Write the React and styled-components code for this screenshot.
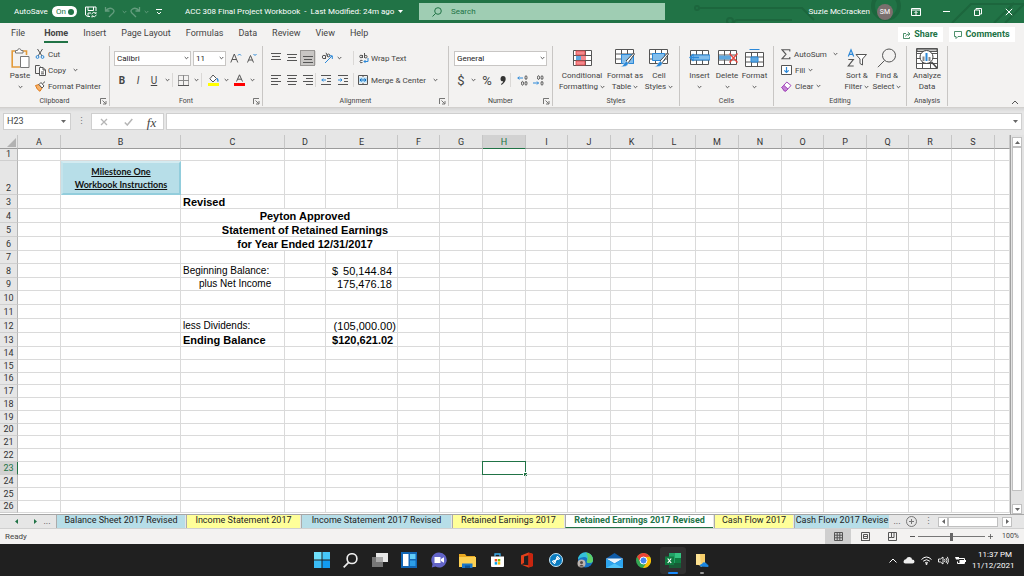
import React from 'react';
import styled, { createGlobalStyle } from 'styled-components';

const GlobalStyle = createGlobalStyle`
  * { box-sizing: border-box; }
  body {
    margin: 0;
    font-family: Roboto, 'Open Sans', sans-serif;
    font-size: 8px;
    line-height: 11px;
    color: #444;
    overflow: hidden;
  }
  button, input, select {
    font: inherit;
    color: inherit;
    border: 0;
    margin: 0;
    padding: 0;
    background: none;
    outline: none;
  }
  svg { display: block; flex: none; }
`;

const Page = styled.div`
  display: flex;
  flex-direction: column;
  height: 100vh;
  background: #e6e6e6;
`;

/* ---------- title bar ---------- */
const TitleBar = styled.header`
  display: flex;
  align-items: center;
  height: 23px;
  flex: none;
  background: #217346;
  color: #fff;
  position: relative;
`;
const Circuit = styled.svg`
  position: absolute;
  right: 0;
  top: 0;
`;
const AutoSave = styled.label`
  display: flex;
  align-items: center;
  justify-content: space-between;
  width: 85px;
  flex: none;
  padding: 0 8px 0 14px;
`;
const Toggle = styled.button`
  display: flex;
  align-items: center;
  justify-content: space-between;
  width: 25px;
  height: 11px;
  padding: 0 3px 0 4px;
  border-radius: 6px;
  background: #fff;
  color: #217346;
  line-height: 11px;
  &::after {
    content: '';
    width: 6px;
    height: 6px;
    border-radius: 3px;
    background: #217346;
  }
`;
const Quick = styled.button`
  display: flex;
  align-items: center;
  justify-content: center;
  width: ${p => p.w}px;
  height: 20px;
  flex: none;
  opacity: ${p => (p.disabled ? 0.3 : 1)};
`;
const DocTitle = styled.div`
  display: flex;
  align-items: center;
  gap: 4px;
  width: 251px;
  flex: none;
  padding-left: 17px;
  white-space: nowrap;
`;
const SearchBox = styled.label`
  display: flex;
  align-items: center;
  gap: 9px;
  width: 246px;
  height: 17px;
  padding-left: 13px;
  background: #9fcdb3;
  color: #217346;
  input { width: 180px; }
  input::placeholder { color: #217346; opacity: 1; }
`;
const Account = styled.div`
  display: flex;
  align-items: center;
  gap: 7px;
  margin-left: auto;
  margin-right: 7px;
  z-index: 1;
`;
const Avatar = styled.span`
  width: 16px;
  height: 16px;
  border-radius: 8px;
  background: #7b6f6e;
  font-size: 7px;
  line-height: 16px;
  text-align: center;
`;
const WindowButton = styled(Quick)`
  width: 31px;
  z-index: 1;
`;

/* ---------- ribbon ---------- */
const TabRow = styled.nav`
  display: flex;
  align-items: center;
  gap: 15px;
  height: 23px;
  flex: none;
  padding: 0 9px 0 11px;
  background: #f3f2f1;
  font-size: 9px;
`;
const RibbonTab = styled.button`
  height: 17px;
  border-bottom: 2px solid ${p => (p.$active ? '#217346' : 'transparent')};
  font-weight: ${p => (p.$active ? 700 : 400)};
  white-space: nowrap;
  &:first-child { margin-right: 4px; }
`;
const TabAction = styled.button`
  display: flex;
  align-items: center;
  justify-content: center;
  gap: 3px;
  width: ${p => p.w}px;
  height: 15px;
  background: #fff;
  color: #217346;
  font-weight: 700;
`;
const TabActions = styled.div`
  display: flex;
  gap: 6px;
  margin-left: auto;
`;
const Ribbon = styled.section`
  display: flex;
  height: 62px;
  flex: none;
  background: #f3f2f1;
  border-bottom: 1px solid #d2d0ce;
`;
const Group = styled.section`
  display: flex;
  flex-direction: column;
  width: ${p => p.w}px;
  flex: none;
  height: 60px;
  border-right: 1px solid #c8c6c4;
`;
const GroupBody = styled.div`
  display: flex;
  flex: 1;
  padding: 0 ${p => p.end || 0}px 0 ${p => p.pad || 0}px;
`;
const GroupFoot = styled.footer`
  display: grid;
  grid-template-columns: minmax(0, 1fr) auto minmax(0, 1fr);
  align-items: center;
  height: 10px;
  font-size: 7px;
  line-height: 10px;
  svg { justify-self: end; margin-right: 2px; }
`;
const Stack = styled.div`
  display: flex;
  flex-direction: column;
  padding-top: ${p => p.top || 0}px;
  gap: ${p => p.gap || 0}px;
`;
const Line = styled.div`
  display: flex;
  align-items: center;
  height: 16px;
`;
const Tool = styled.button`
  display: flex;
  align-items: center;
  justify-content: center;
  width: ${p => p.w}px;
  height: 16px;
  flex: none;
  font-size: ${p => p.size || 10}px;
  background: ${p => (p.$on ? '#c8c6c4' : 'none')};
  box-shadow: ${p => (p.$on ? 'inset 0 0 0 1px #979593' : 'none')};
`;
const Rule = styled.span`
  width: 1px;
  height: 14px;
  margin-right: ${p => p.after || 0}px;
  background: #dad8d6;
`;
const TextTool = styled.button`
  display: flex;
  align-items: center;
  gap: ${p => p.gap || 3}px;
  height: 16px;
  white-space: nowrap;
`;
const BigTool = styled.button`
  display: flex;
  flex-direction: column;
  align-items: center;
  width: ${p => p.w}px;
  flex: none;
  white-space: nowrap;
`;
const BigIcon = styled.span`
  display: flex;
  align-items: center;
  justify-content: center;
  height: 24px;
`;
const BigLine = styled.span`
  display: flex;
  align-items: center;
  justify-content: center;
  gap: 2px;
  height: 11px;
`;
const Field = styled.span`
  display: flex;
  align-items: center;
  width: ${p => p.w}px;
  height: 15px;
  margin-right: 2px;
  padding: 0 1px 0 2px;
  background: #fff;
  border: 1px solid #c8c6c4;
  select {
    flex: 1;
    min-width: 0;
    appearance: none;
    color: #222;
  }
`;
const Collapse = styled.button`
  align-self: flex-end;
  margin: 0 5px 2px auto;
`;

/* ---------- formula bar ---------- */
const FormulaBar = styled.div`
  display: flex;
  align-items: center;
  height: 27px;
  flex: none;
  padding: 0 2px 0 3px;
  background: linear-gradient(#d6d6d6, #e6e6e6 4px);
`;
const NameBox = styled.label`
  display: flex;
  align-items: center;
  justify-content: space-between;
  width: 68px;
  height: 17px;
  padding: 0 4px 0 3px;
  background: #fff;
  border: 1px solid #cfcfcf;
  font-size: 9px;
  input { width: 45px; }
`;
const Dots = styled.span`
  width: 20px;
  flex: none;
  text-align: center;
  color: #777;
  font-size: 9px;
`;
const FormulaTools = styled.div`
  display: flex;
  width: 73px;
  height: 17px;
  background: #fff;
  border: 1px solid #cfcfcf;
  font-family: 'Liberation Serif', serif;
`;
const FormulaField = styled.label`
  display: flex;
  align-items: center;
  flex: 1;
  height: 17px;
  margin-left: 2px;
  padding-right: 3px;
  background: #fff;
  border: 1px solid #cfcfcf;
  input { flex: 1; }
`;

/* ---------- sheet ---------- */
const SheetArea = styled.main`
  display: flex;
  flex: 1;
  min-height: 0;
`;
const GridWrap = styled.div`
  flex: 1;
  min-width: 0;
  overflow: hidden;
  background: #fff;
  border-right: 1px solid #a0a0a0;
`;
const Grid = styled.table`
  width: 100%;
  table-layout: fixed;
  border-collapse: separate;
  border-spacing: 0;
  font-size: 9px;
`;
const ColHead = styled.th`
  height: 14px;
  padding: 1px 0 0;
  background: ${p => (p.$on ? '#d2d2d2' : '#e6e6e6')};
  border-right: 1px solid #c6c6c6;
  border-bottom: 1px solid ${p => (p.$on ? '#217346' : '#9b9b9b')};
  color: ${p => (p.$on ? '#217346' : '#333')};
  font-weight: 400;
  line-height: 12px;
`;
const Corner = styled(ColHead)`
  svg { margin-left: auto; margin-right: 1px; }
`;
const RowHead = styled.th`
  height: ${p => p.h}px;
  padding: 0;
  background: ${p => (p.$on ? '#d2d2d2' : '#e6e6e6')};
  border-right: 1px solid ${p => (p.$on ? '#217346' : '#b5b5b5')};
  border-bottom: 1px solid #cfcfcf;
  color: ${p => (p.$on ? '#217346' : '#333')};
  font-weight: 400;
  line-height: 11px;
  vertical-align: bottom;
`;
const Cell = styled.td`
  position: relative;
  padding: 0 ${p => p.right || 0}px 0 ${p => p.left || 2}px;
  border-right: 1px solid #dadada;
  border-bottom: 1px solid #dadada;
  color: #000;
  font-family: 'Liberation Sans', Arial, sans-serif;
  font-size: ${p => p.size || 11}px;
  font-weight: ${p => (p.$bold ? 700 : 400)};
  line-height: 12px;
  text-align: ${p => p.$align || 'left'};
  white-space: nowrap;
`;
const Money = styled.span`
  display: flex;
  justify-content: ${p => (p.$spread ? 'space-between' : 'flex-end')};
`;
const LinkCell = styled(Cell)`
  padding: 0;
  border: 0;
`;
const SheetLink = styled.a`
  display: flex;
  align-items: center;
  justify-content: center;
  height: 34px;
  border: 2px solid;
  border-color: #d3ebf1 #92cddc #92cddc #c4e3eb;
  background: #b7dee8;
  color: #111;
  font: 700 9px/13px Lato, 'Open Sans', sans-serif;
  text-align: center;
`;
const Selection = styled.span`
  position: absolute;
  inset: -1px;
  border: 1px solid #217346;
  &::after {
    content: '';
    position: absolute;
    right: -2px;
    bottom: -2px;
    width: 3px;
    height: 3px;
    background: #217346;
    box-shadow: -1px -1px 0 #fff;
  }
`;
const VScroll = styled.div`
  display: flex;
  flex-direction: column;
  width: 13px;
  padding: 2px 2px 0 1px;
  background: #e2e2e2;
`;
const ScrollButton = styled.button`
  display: flex;
  align-items: center;
  justify-content: center;
  width: 10px;
  height: 10px;
  flex: none;
  background: #fff;
  border: 1px solid #c0c0c0;
`;
const VThumb = styled.div`
  flex: 0 1 344px;
  background: #fff;
  border: 1px solid #c0c0c0;
`;
const Fill = styled.span`
  flex: 1;
`;

/* ---------- sheet tabs + status ---------- */
const SheetTabs = styled.div`
  display: flex;
  align-items: center;
  height: 15px;
  flex: none;
  border-top: 1px solid #a6a6a6;
  border-bottom: 1px solid #d0d0d0;
  background: #e6e6e6;
`;
const tabColors = { blue: '#b7dee8', yellow: '#ffff99', active: '#fff' };
const SheetTab = styled.button`
  height: 13px;
  flex: none;
  width: ${p => p.w}px;
  padding-bottom: 2px;
  overflow: hidden;
  background: ${p => tabColors[p.$tone]};
  border-left: 1px solid #ababab;
  border-bottom: ${p => (p.$tone === 'active' ? '1px solid #217346' : 0)};
  color: ${p => (p.$tone === 'active' ? '#217346' : '#222')};
  font-size: 9px;
  font-weight: ${p => (p.$tone === 'active' ? 700 : 400)};
  line-height: 11px;
  white-space: nowrap;
  margin-right: 1px;
`;
const TabNav = styled.button`
  display: flex;
  align-items: center;
  justify-content: center;
  width: ${p => p.w}px;
  flex: none;
  height: 13px;
  font-size: 9px;
`;
const HScroll = styled.div`
  display: flex;
  align-items: center;
  margin-left: auto;
  margin-right: 13px;
`;
const HThumb = styled.div`
  width: 50px;
  height: 10px;
  margin-right: 4px;
  background: #fff;
  border: 1px solid #c0c0c0;
`;
const StatusBar = styled.footer`
  display: flex;
  align-items: center;
  height: 15px;
  flex: none;
  padding: 0 5px 0 5px;
  background: #f3f2f1;
`;
const Views = styled.div`
  display: flex;
  gap: 1px;
  margin-right: 5px;
`;
const ViewButton = styled.button`
  display: flex;
  align-items: center;
  justify-content: center;
  width: 26px;
  height: 15px;
  background: ${p => (p.$on ? '#cfcfcf' : 'none')};
`;
const Zoom = styled.input`
  appearance: none;
  width: 67px;
  height: 9px;
  margin: 0 3px;
  background: linear-gradient(#777, #777) center / 100% 1px no-repeat;
  &::-webkit-slider-thumb {
    appearance: none;
    width: 3px;
    height: 8px;
    background: #666;
  }
`;
const Percent = styled.span`
  width: 26px;
  text-align: right;
  font-size: 7px;
`;

/* ---------- taskbar ---------- */
const Taskbar = styled.footer`
  display: grid;
  grid-template-columns: 1fr 407px 1fr;
  align-items: center;
  height: 32px;
  flex: none;
  background: #202020;
  color: #fff;
`;
const Apps = styled.div`
  display: flex;
  justify-content: space-between;
`;
const AppButton = styled.button`
  display: flex;
  flex-direction: column;
  align-items: center;
  justify-content: center;
  width: 26px;
  height: 27px;
  border-radius: 3px;
  background: ${p => (p.$open ? '#303030' : 'none')};
  position: relative;
  &::after {
    content: '';
    position: absolute;
    bottom: 0;
    width: ${p => p.$bar || 0}px;
    height: 2px;
    border-radius: 1px;
    background: ${p => (p.$open ? '#1a8cff' : '#9a9a9a')};
  }
`;
const Tray = styled.div`
  display: flex;
  align-items: center;
  justify-content: flex-end;
  gap: 6px;
  padding-right: 12px;
`;
const Clock = styled.time`
  width: 40px;
  text-align: right;
  white-space: nowrap;
`;

/* ---------- icons ---------- */
const Icon = ({ w = 10, h = w, box, children, ...rest }) => (
  <svg
    width={w}
    height={h}
    viewBox={box || `0 0 ${w} ${h}`}
    fill="none"
    stroke="#555"
    strokeWidth="1"
    aria-hidden="true"
    {...rest}
  >
    {children}
  </svg>
);

const Chevron = ({ color = '#555' }) => (
  <Icon w={5} h={4} stroke={color}><path d="M.7 1 2.5 2.8 4.3 1" /></Icon>
);
const Caret = ({ dir = 'down', color = '#666' }) => {
  const paths = {
    down: 'M0 1h5L2.5 4z',
    up: 'M0 4h5L2.5 1z',
    left: 'M4 0v5L1 2.500z',
    right: 'M1 0v5l3-2.500z',
  };
  return <Icon w={5} fill={color} stroke="none"><path d={paths[dir]} /></Icon>;
};
const Launcher = () => (
  <Icon w={7}><path d="M.5 6V.5H6M2.500 2.500l3 3M6 3v3H3" strokeWidth=".8" /></Icon>
);
const Lines = ({ rows }) => (
  <Icon w={10} h={10}>
    {rows.map(([x, y, len]) => <path key={y} d={`M${x} ${y}.5h${len}`} />)}
  </Icon>
);

const PasteIcon = () => (
  <Icon w={19} h={21}>
    <path d="M4 3H1.200v16H9" stroke="#e39b3b" strokeWidth="1.600" />
    <path d="M12 3h3.500v4" stroke="#e39b3b" strokeWidth="1.600" />
    <path d="M4.500 5V2.500h2q.2-1.800 1.800-1.800T10 2.500h2V5z" fill="#fff" stroke="#777" />
    <path d="M9.500 8.500h8.500v11H9.500z" fill="#fff" stroke="#777" />
  </Icon>
);
const CutIcon = () => (
  <Icon w={10}>
    <path d="M2.500 0 7 7M7.500 0 3 7" />
    <circle cx="2.500" cy="8" r="1.400" stroke="#2b88d8" />
    <circle cx="7.500" cy="8" r="1.400" stroke="#2b88d8" />
  </Icon>
);
const CopyIcon = () => (
  <Icon w={11}>
    <path d="M4 8.500H.5v-8h4l1 1" />
    <path d="M4.500 2.500h3.500l2.500 2.500v5.500h-6zM8 2.500V5h2.500M6 7h3M6 8.800h3" fill="#fff" />
  </Icon>
);
const PainterIcon = () => (
  <Icon w={11}>
    <path d="M.5 4.500 4 3.500 7 7 5 10.300Q2 9 .5 4.500z" fill="#f6b26b" stroke="#e07b1c" />
    <path d="m4 3.500 2-2L9 5 7 7zM7.500 2.800 10 .6" fill="#fff" />
  </Icon>
);
const BordersIcon = () => (
  <Icon w={11}>
    <path d="M.5.5h10v10H.5z" strokeDasharray="1 1" />
    <path d="M5.500 0v11M0 5.500h11" stroke="#888" />
    <path d="M0 10.500h11" />
  </Icon>
);
const BucketIcon = () => (
  <Icon w={11} h={12}>
    <path d="m5 1 3.500 3.500L5 8 1.800 4.800z" fill="#fff" />
    <path d="M9 4.500q1.500 2 .6 3.200" stroke="#2b88d8" strokeWidth="1.300" />
    <path d="M0 10.500h11" stroke="#ff0" strokeWidth="3" />
  </Icon>
);
const FontColorIcon = () => (
  <Icon w={11} h={12}>
    <path d="M2.500 7.500 5.500.8l3 6.700M3.600 5.200h3.800" />
    <path d="M0 10.500h11" stroke="#f00" strokeWidth="3" />
  </Icon>
);
const FontSizeIcon = ({ up }) => (
  <Icon w={12} h={12}>
    <path d={up ? 'M.8 10.500 4.300 2l3.500 8.500M2 7.500h4.600' : 'M1.500 10.500l3-7 3 7M2.600 8h3.800'} />
    <path d={up ? 'M8 3.500 9.500 2 11 3.500' : 'M7.500 2 9 3.500 10.500 2'} stroke="#2b88d8" />
  </Icon>
);
const OrientIcon = () => (
  <Icon w={12}>
    <circle cx="3" cy="5" r="1.700" />
    <path d="M4.500 3.500v3.500M5 .8 7 5" />
    <circle cx="7.500" cy="3.500" r="1.400" />
    <path d="M4 11 11 4M8 3.800h3.300V7" stroke="#2b88d8" />
  </Icon>
);
const IndentIcon = ({ inward }) => (
  <Icon w={10}>
    <path d="M0 .5h10M6 3.500h4M6 6.500h4M0 9.500h10" />
    <path d={inward ? 'M0 5h4M2.500 3.500 4 5 2.500 6.500' : 'M5 5H.8M2.300 3.500.8 5l1.500 1.500'} stroke="#2b88d8" />
  </Icon>
);
const WrapIcon = () => (
  <Icon w={10} h={11}>
    <circle cx="2" cy="3.500" r="1.300" />
    <path d="M3.500 2v3M5.500 0v5M3.500 7.500Q1 6.500 1 8.500t2.500 1" />
    <circle cx="6.800" cy="3.700" r="1.300" />
    <path d="M9 5v3.500H5M6.500 7 5 8.500 6.500 10" stroke="#2b88d8" />
  </Icon>
);
const MergeIcon = () => (
  <Icon w={10} h={10}>
    <path d="M.5.5h9v9h-9zM5 0v2M5 8v2" />
    <path d="M1 2.500h8v5H1z" fill="#b5dcf5" stroke="none" />
    <path d="M2 5h6M3.500 3.500 2 5l1.500 1.500M6.500 3.500 8 5 6.500 6.500" stroke="#0f6cbd" />
  </Icon>
);
const DecimalIcon = ({ grow }) => (
  <Icon w={11} h={11}>
    <ellipse cx={grow ? 9 : 5.500} cy="2.600" rx="1" ry="1.900" />
    <ellipse cx={grow ? 5.500 : 9} cy="8.300" rx="1" ry="1.900" />
    <ellipse cx="9" cy={grow ? 8.300 : 2.600} rx="1" ry="1.900" />
    <path d={grow ? 'M6 3H.8M2.300 1.500.8 3l1.500 1.500' : 'M0 8h5.500M4 6.500 5.500 8 4 9.500'} stroke="#2b88d8" />
  </Icon>
);
const CondIcon = () => (
  <Icon w={19} h={16}>
    <path d="M.5.5h18v15H.5zM0 5.500h19M0 10.500h19M6.500 0v16M12.500 0v16" fill="#fff" />
    <path d="M3 1h9v4H3zM3 11h9v4H3z" fill="#f4888d" stroke="#e04848" strokeWidth=".8" />
    <path d="M3 6h5v4H3z" fill="#5ea7df" stroke="none" />
    <path d="M8 6h5v4H8z" fill="#f4888d" stroke="none" />
  </Icon>
);
const TableIcon = ({ cell }) => (
  <Icon w={20} h={19}>
    <path d="M.5.5h18v14H.5zM0 5h19M0 10h19M6.500 0v15M12.500 0v15" fill="#fff" />
    <path d={cell ? 'M3.500 4.500h12v7h-12z' : 'M6.500 5.500h12v9h-12z'} fill="#83beec" stroke="#2b88d8" />
    <path d="m11 12 7.500-8 1 1-6.500 9z" fill="#fff" stroke="#444" />
    <path d="M5 17.500q3 0 4-3 .8-2 2.500-2t1.800 2q-1 4-8.300 3z" fill="#2b88d8" stroke="#f3f2f1" strokeWidth=".5" />
  </Icon>
);
const CellsIcon = ({ kind }) => (
  <Icon w={21} h={kind === 'format' ? 20 : 16} box={kind === 'format' ? '0 -4 21 20' : undefined}>
    <path d="M1.500.5h18v14h-18zM1 5h19M1 10h19M7.500 0v15M13.500 0v15" fill="#fff" />
    {kind === 'insert' && (
      <>
        <path d="M4 5h17v5H4z" fill="#83beec" stroke="#2b88d8" />
        <path d="M10 7.500H1M4.500 4 1 7.500 4.500 11" stroke="#2b88d8" strokeWidth="1.300" />
      </>
    )}
    {kind === 'delete' && (
      <>
        <path d="M2 5.500h12v4H2z" fill="#5ea7df" stroke="none" />
        <path d="m12.500 3.500 8 9M20.500 3.500l-8 9" stroke="#e8453c" strokeWidth="1.300" />
      </>
    )}
    {kind === 'format' && (
      <>
        <path d="M7 5h7v5H7z" fill="#5ea7df" stroke="#2b88d8" />
        <path d="M5.500-2.500h10" stroke="#2b88d8" />
      </>
    )}
  </Icon>
);
const SumIcon = () => (
  <Icon w={10} h={11}><path d="M8.800 2.500V.7H1l4 4.600-4 4.500h7.800V8" strokeWidth="1.100" /></Icon>
);
const FillIcon = () => (
  <Icon w={11} h={10}>
    <path d="M.5.5h10v9H.5z" fill="#fff" />
    <path d="M5.500 2v5.500M3.300 5.300l2.200 2.200 2.200-2.200" stroke="#2b88d8" strokeWidth="1.200" />
  </Icon>
);
const EraserIcon = () => (
  <Icon w={11} h={11}>
    <path d="m.8 6.500 5-5.500L10 4.500l-5 5.500H3.500z" fill="#fff" stroke="#a347ba" />
    <path d="m.8 6.500 2-2.200L7 8l-2 2H3.500z" fill="#c583d6" stroke="#a347ba" />
  </Icon>
);
const SortIcon = () => (
  <Icon w={20} h={20}>
    <path d="M1.300 8.500 4 1.800l2.700 6.700M2.200 6.300h3.600" stroke="#2b88d8" strokeWidth="1.200" />
    <path d="M1.300 11.500h5l-5 6.500h5.400" strokeWidth="1.200" />
    <path d="M9 6.500h10.500L15.500 11v6l-2.500-1.500V11z" fill="#fff" />
  </Icon>
);
const Magnifier = ({ size = 20, color = '#555', weight = 1 }) => (
  <Icon w={size} box="0 0 20 20" stroke={color} strokeWidth={weight}>
    <circle cx="12" cy="7.500" r="6.500" /><path d="M7.500 12.500.9 19.200" />
  </Icon>
);
const AnalyzeIcon = () => (
  <Icon w={22} h={21}>
    <path d="M.5.5h21v20H.5zM0 5.500h22M0 10.500h22M0 15.500h22M6.500 4v17M14.500 4v17" fill="#fff" />
    <path d="M1 1h20v2.500H1z" fill="#ccc" />
    <circle cx="10.500" cy="9" r="6.500" fill="#fff" stroke="#444" />
    <path d="m15.500 14 5.500 6" stroke="#444" strokeWidth="1.500" />
    <path d="M7.500 13V8.500M13.500 13V9" stroke="#888" strokeWidth="2" />
    <path d="M10.500 13V5" stroke="#2b88d8" strokeWidth="2" />
  </Icon>
);

/* ---------- data ---------- */
const ribbonTabs = ['File', 'Home', 'Insert', 'Page Layout', 'Formulas', 'Data', 'Review', 'View', 'Help'];
const columns = [
  ['A', 43], ['B', 120], ['C', 104], ['D', 41], ['E', 72], ['F', 42], ['G', 43],
  ['H', 43], ['I', 42], ['J', 43], ['K', 42], ['L', 43], ['M', 43], ['N', 43],
  ['O', 42], ['P', 43], ['Q', 42], ['R', 43], ['S', 43], ['', null],
];
const rowHeights = [
  12, 34, 14, 14, 14, 14, 13, 14, 13, 14, 14, 14, 14,
  13, 13, 12, 13, 13, 13, 12, 13, 13, 13, 13, 13, 12,
];
const headings = {
  4: 'Peyton Approved',
  5: 'Statement of Retained Earnings',
  6: 'for Year Ended 12/31/2017',
};
const labels = {
  3: { text: 'Revised', bold: true },
  8: { text: 'Beginning Balance:' },
  9: { text: 'plus Net Income', left: 18 },
  12: { text: 'less Dividends:' },
  13: { text: 'Ending Balance', bold: true },
};
const amounts = {
  8: { sign: '$', text: '50,144.84' },
  9: { text: '175,476.18' },
  12: { text: '(105,000.00)', right: 1 },
  13: { sign: '$', text: '120,621.02', bold: true },
};
const sheets = [
  ['Balance Sheet 2017 Revised', 129, 'blue'],
  ['Income Statement 2017', 114, 'yellow'],
  ['Income Statement 2017 Revised', 150, 'blue'],
  ['Retained Earnings 2017', 112, 'yellow'],
  ['Retained Earnings 2017 Revised', 148, 'active'],
  ['Cash Flow 2017', 79, 'yellow'],
  ['Cash Flow 2017 Revise', 95, 'blue'],
];

const Head = () => (
  <>
    <TitleBar>
      <Circuit width="360" height="23" fill="none" stroke="#1c663d" strokeWidth="2" aria-hidden="true">
        <circle cx="33" cy="8" r="2" />
        <path d="M36 8h102l12 12M70 23q0-3 4-3h54" />
        <circle cx="66" cy="21" r="3" />
        <circle cx="222" cy="6" r="13" strokeWidth="4" />
        <path d="M288 23 307 4h53M330 23 350 3M341 23l19-19" />
      </Circuit>
      <AutoSave>AutoSave<Toggle type="button">On</Toggle></AutoSave>
      <Quick w={12} aria-label="Save">
        <Icon w={12} stroke="#fff">
          <path d="M5 10.500H2.500L.5 9V1h10.500v4M3 1v3.500h5.500V1M3 10V7h3" />
          <path d="M6.500 8q2-3 4.500-.5V6M11.500 9q-2 3-4.500.8V11.500" />
        </Icon>
      </Quick>
      <Quick w={24} disabled aria-label="Undo">
        <Icon w={11} h={12} stroke="#fff" strokeWidth="1.300"><path d="M1.500 1v4h4M1.500 5Q5 .8 8.500 3t-1 5.500L5 11" /></Icon>
      </Quick>
      <Quick w={6} disabled aria-label="Undo list"><Chevron color="#fff" /></Quick>
      <Quick w={16} disabled aria-label="Redo">
        <Icon w={11} h={12} stroke="#fff" strokeWidth="1.300"><path d="M9.500 1v4h-4M9.500 5Q6 .8 2.500 3t1 5.500L6 11" /></Icon>
      </Quick>
      <Quick w={6} disabled aria-label="Redo list"><Chevron color="#fff" /></Quick>
      <Quick w={19} aria-label="Customize toolbar">
        <Icon w={6} stroke="#fff"><path d="M0 .5h6M1 3l2 2 2-2" /></Icon>
      </Quick>
      <DocTitle>
        <span>ACC 308 Final Project Workbook</span>
        <span>-</span>
        <span>Last Modified: 24m ago</span>
        <Caret color="#fff" />
      </DocTitle>
      <SearchBox>
        <Icon w={10} stroke="#217346"><circle cx="6" cy="4" r="3.300" /><path d="M3.500 6.500.5 9.500" /></Icon>
        <input placeholder="Search" aria-label="Search" />
      </SearchBox>
      <Account>Suzie McCracken<Avatar>SM</Avatar></Account>
      <WindowButton aria-label="Ribbon display options">
        <Icon w={10} h={8} stroke="#fff"><path d="M.5.5h9v7h-9zM0 2h10M5 7V3.500M3.500 5 5 3.500 6.500 5" /></Icon>
      </WindowButton>
      <WindowButton aria-label="Minimize"><Icon w={7} h={1} stroke="#fff"><path d="M0 .5h7" /></Icon></WindowButton>
      <WindowButton aria-label="Restore">
        <Icon w={8} stroke="#fff"><path d="M.5 2h5v5.500h-5zM2 1.800V.5h5.500V6H6" /></Icon>
      </WindowButton>
      <WindowButton aria-label="Close"><Icon w={8} stroke="#fff"><path d="m.8.8 6.400 6.400M7.200.8.8 7.200" /></Icon></WindowButton>
    </TitleBar>
    <TabRow>
      {ribbonTabs.map(name => <RibbonTab key={name} $active={name === 'Home'}>{name}</RibbonTab>)}
      <TabActions>
        <TabAction w={45}>
          <Icon w={8} stroke="#217346" strokeWidth=".8"><path d="M3 2.500H.5v5h6V6M2.500 5.500Q3 3 6 3M4.800 1 7 3 4.800 5" /></Icon>
          Share
        </TabAction>
        <TabAction w={66}>
          <Icon w={8} stroke="#217346" strokeWidth=".8"><path d="M.5.5h7v5H4L2 7.500v-2H.5z" /></Icon>
          Comments
        </TabAction>
      </TabActions>
    </TabRow>
  </>
);

const RibbonGroup = ({ w, name, pad, end, launcher, children }) => (
  <Group w={w} aria-label={name}>
    <GroupBody pad={pad} end={end}>{children}</GroupBody>
    <GroupFoot><span /><span>{name}</span>{launcher && <Launcher />}</GroupFoot>
  </Group>
);

const Big = ({ w, icon, lines, below }) => (
  <BigTool w={w}>
    <BigIcon>{icon}</BigIcon>
    {lines.map((line, i) => (
      <BigLine key={line}>
        {line}
        {below === 'inline' && i === lines.length - 1 && <Chevron />}
      </BigLine>
    ))}
    {below === 'under' && <BigLine><Chevron /></BigLine>}
  </BigTool>
);

const RibbonBar = () => (
  <Ribbon>
    <RibbonGroup w={110} name="Clipboard" pad={5} launcher>
      <Big w={30} icon={<PasteIcon />} lines={['Paste']} below="under" />
      <Stack>
        <TextTool gap={3}><CutIcon />Cut</TextTool>
        <TextTool gap={2}><CopyIcon />Copy<Tool as="span" w={14}><Chevron /></Tool></TextTool>
        <TextTool gap={2}><PainterIcon />Format Painter</TextTool>
      </Stack>
    </RibbonGroup>
    <RibbonGroup w={153} name="Font" pad={4} launcher>
      <Stack top={4} gap={6}>
        <Line>
          <Field w={77}>
            <select aria-label="Font"><option>Calibri</option></select><Chevron />
          </Field>
          <Field w={33}>
            <select aria-label="Font size"><option>11</option></select><Chevron />
          </Field>
          <Tool w={15} aria-label="Increase font size"><FontSizeIcon up /></Tool>
          <Tool w={18} aria-label="Decrease font size"><FontSizeIcon /></Tool>
        </Line>
        <Line>
          <Tool w={16}><b>B</b></Tool>
          <Tool w={16}><i>I</i></Tool>
          <Tool w={16}><u>U</u></Tool>
          <Tool w={10} aria-label="Underline style"><Chevron /></Tool>
          <Rule after={3} />
          <Tool w={15} aria-label="Borders"><BordersIcon /></Tool>
          <Tool w={10} aria-label="Border style"><Chevron /></Tool>
          <Rule after={4} />
          <Tool w={15} aria-label="Fill color"><BucketIcon /></Tool>
          <Tool w={10} aria-label="Fill color list"><Chevron /></Tool>
          <Tool w={17} aria-label="Font color"><FontColorIcon /></Tool>
          <Tool w={8} aria-label="Font color list"><Chevron /></Tool>
        </Line>
      </Stack>
    </RibbonGroup>
    <RibbonGroup w={186} name="Alignment" pad={5} launcher>
      <Stack top={4} gap={6}>
        <Line>
          <Tool w={16} aria-label="Top align"><Lines rows={[[0, 0, 10], [1, 3, 8], [0, 6, 10]]} /></Tool>
          <Tool w={16} aria-label="Middle align"><Lines rows={[[0, 1, 10], [1, 4, 8], [0, 7, 10]]} /></Tool>
          <Tool w={15} $on aria-label="Bottom align"><Lines rows={[[0, 3, 10], [1, 6, 8], [0, 9, 10]]} /></Tool>
          <Rule after={3} />
          <Tool w={15} aria-label="Orientation"><OrientIcon /></Tool>
          <Tool w={10} aria-label="Orientation list"><Chevron /></Tool>
          <Tool as="span" w={9} />
          <Rule after={5} />
          <TextTool gap={2}><WrapIcon />Wrap Text</TextTool>
        </Line>
        <Line>
          <Tool w={16} aria-label="Align left"><Lines rows={[[0, 0, 10], [0, 3, 7], [0, 6, 10], [0, 9, 7]]} /></Tool>
          <Tool w={16} aria-label="Center"><Lines rows={[[0, 0, 10], [1, 3, 8], [0, 6, 10], [1, 9, 8]]} /></Tool>
          <Tool w={15} aria-label="Align right"><Lines rows={[[0, 0, 10], [3, 3, 7], [0, 6, 10], [3, 9, 7]]} /></Tool>
          <Rule after={3} />
          <Tool w={14} aria-label="Decrease indent"><IndentIcon /></Tool>
          <Tool w={20} aria-label="Increase indent"><IndentIcon inward /></Tool>
          <Rule after={4} />
          <TextTool gap={3}><MergeIcon />Merge &amp; Center</TextTool>
          <Tool w={20} aria-label="Merge list"><Chevron /></Tool>
        </Line>
      </Stack>
    </RibbonGroup>
    <RibbonGroup w={104} name="Number" pad={5} launcher>
      <Stack top={4} gap={6}>
        <Line>
          <Field w={93}>
            <select aria-label="Number format"><option>General</option></select><Chevron />
          </Field>
        </Line>
        <Line>
          <Tool w={14} size={13}>$</Tool>
          <Tool w={10} aria-label="Currency list"><Chevron /></Tool>
          <Tool w={18} size={13}>%</Tool>
          <Tool w={14} aria-label="Comma style">
            <Icon w={6} h={9} fill="#333" stroke="none"><path d="M3 0q2.700 0 2.700 3T1.500 9L1 8q2-1.300 2.200-2.700Q.5 5.500.5 2.700T3 0z" /></Icon>
          </Tool>
          <Rule after={4} />
          <Tool w={15} aria-label="Increase decimal"><DecimalIcon grow /></Tool>
          <Tool w={16} aria-label="Decrease decimal"><DecimalIcon /></Tool>
        </Line>
      </Stack>
    </RibbonGroup>
    <RibbonGroup w={127} name="Styles" pad={5}>
      <Big w={48} icon={<CondIcon />} lines={['Conditional', 'Formatting']} below="inline" />
      <Big w={38} icon={<TableIcon />} lines={['Format as', 'Table']} below="inline" />
      <Big w={30} icon={<TableIcon cell />} lines={['Cell', 'Styles']} below="inline" />
    </RibbonGroup>
    <RibbonGroup w={94} name="Cells" pad={6}>
      <Big w={27} icon={<CellsIcon kind="insert" />} lines={['Insert']} below="under" />
      <Big w={28} icon={<CellsIcon kind="delete" />} lines={['Delete']} below="under" />
      <Big w={27} icon={<CellsIcon kind="format" />} lines={['Format']} below="under" />
    </RibbonGroup>
    <RibbonGroup w={133} name="Editing" pad={7} end={6}>
      <Stack>
        <TextTool><SumIcon />AutoSum<Tool as="span" w={12}><Chevron /></Tool></TextTool>
        <TextTool><FillIcon />Fill<Chevron /></TextTool>
        <TextTool><EraserIcon />Clear<Chevron /></TextTool>
      </Stack>
      <Fill />
      <Big w={30} icon={<SortIcon />} lines={['Sort &', 'Filter']} below="inline" />
      <Big w={30} icon={<Magnifier />} lines={['Find &', 'Select']} below="inline" />
    </RibbonGroup>
    <RibbonGroup w={41} name="Analysis">
      <Big w={40} icon={<AnalyzeIcon />} lines={['Analyze', 'Data']} />
    </RibbonGroup>
    <Collapse aria-label="Collapse ribbon"><Icon w={8} h={5}><path d="M1 4 4 1l3 3" /></Icon></Collapse>
  </Ribbon>
);

const Formula = () => (
  <FormulaBar>
    <NameBox><input defaultValue="H23" aria-label="Name box" /><Caret /></NameBox>
    <Dots>⋮</Dots>
    <FormulaTools>
      <Tool w={24} aria-label="Cancel"><Icon w={8} stroke="#b5b5b5" strokeWidth="1.300"><path d="m1 1 6 6M7 1 1 7" /></Icon></Tool>
      <Tool w={24} aria-label="Enter"><Icon w={9} h={8} stroke="#b5b5b5" strokeWidth="1.500"><path d="m.8 4.500 2.500 2.500 5-6" /></Icon></Tool>
      <Tool w={23} size={13}><i>fx</i></Tool>
    </FormulaTools>
    <FormulaField><input aria-label="Formula" /><Caret /></FormulaField>
  </FormulaBar>
);

const renderCell = (row, col) => {
  if (row === 2 && col === 'B') {
    return <LinkCell key={col}><SheetLink href="#">Milestone One<br />Workbook Instructions</SheetLink></LinkCell>;
  }
  if (headings[row]) {
    if (col === 'C') return <Cell key={col} colSpan={4} $bold $align="center" right={12}>{headings[row]}</Cell>;
    if (['D', 'E', 'F'].includes(col)) return null;
  }
  if (col === 'C' && labels[row]) {
    const { text, bold, left } = labels[row];
    return <Cell key={col} $bold={bold} size={bold ? 11 : 10} left={left}>{text}</Cell>;
  }
  if (col === 'E' && amounts[row]) {
    const { sign, text, bold, right = 5 } = amounts[row];
    return (
      <Cell key={col} $bold={bold} left={6} right={right}>
        <Money $spread={!!sign}>{sign && <span>{sign}</span>}<span>{text}</span></Money>
      </Cell>
    );
  }
  return <Cell key={col || 'rest'}>{row === 23 && col === 'H' && <Selection />}</Cell>;
};

const Sheet = () => (
  <SheetArea>
    <GridWrap>
      <Grid>
        <colgroup>
          <col width="18" />
          {columns.map(([name, width]) => <col key={name} width={width || undefined} />)}
        </colgroup>
        <thead>
          <tr>
            <Corner aria-label="Select all"><Icon w={9} fill="#b2b2b2" stroke="none"><path d="M9 0v9H0z" /></Icon></Corner>
            {columns.map(([name]) => <ColHead key={name} $on={name === 'H'}>{name}</ColHead>)}
          </tr>
        </thead>
        <tbody>
          {rowHeights.map((h, i) => (
            <tr key={i}>
              <RowHead h={h} $on={i === 22}>{i + 1}</RowHead>
              {columns.map(([name]) => renderCell(i + 1, name))}
            </tr>
          ))}
        </tbody>
      </Grid>
    </GridWrap>
    <VScroll>
      <ScrollButton aria-label="Scroll up"><Caret dir="up" /></ScrollButton>
      <VThumb />
      <Fill />
      <ScrollButton aria-label="Scroll down"><Caret /></ScrollButton>
    </VScroll>
  </SheetArea>
);

const Bottom = () => (
  <>
    <SheetTabs>
      <TabNav w={32} aria-label="Previous sheet"><Caret dir="left" color="#217346" /></TabNav>
      <TabNav w={6} aria-label="Next sheet"><Caret dir="right" color="#217346" /></TabNav>
      <TabNav w={18}>...</TabNav>
      {sheets.map(([name, w, tone]) => <SheetTab key={name} w={w} $tone={tone}>{name}</SheetTab>)}
      <TabNav w={14}>...</TabNav>
      <TabNav w={14} aria-label="New sheet">
        <Icon w={11} stroke="#777"><circle cx="5.500" cy="5.500" r="5" /><path d="M5.500 3v5M3 5.500h5" /></Icon>
      </TabNav>
      <Dots>⋮</Dots>
      <HScroll>
        <ScrollButton aria-label="Scroll left"><Caret dir="left" /></ScrollButton>
        <HThumb />
        <ScrollButton aria-label="Scroll right"><Caret dir="right" /></ScrollButton>
      </HScroll>
    </SheetTabs>
    <StatusBar>
      Ready
      <Fill />
      <Views>
        <ViewButton $on aria-label="Normal"><Icon w={9}><path d="M.5.5h8v8h-8zM0 3.200h9M0 5.800h9M3.200 0v9M5.800 0v9" /></Icon></ViewButton>
        <ViewButton aria-label="Page layout"><Icon w={9}><path d="M.5.5h8v8h-8zM2.500 2.500h4v4h-4zM3 4.500h3M0 8.500h9" /></Icon></ViewButton>
        <ViewButton aria-label="Page break preview"><Icon w={9}><path d="M.5.5h8v8h-8zM3.500 0v5.500h2.500V0M0 5.500h3.500" /></Icon></ViewButton>
      </Views>
      <Icon w={5} h={1}><path d="M0 .5h5" /></Icon>
      <Zoom type="range" defaultValue="50" aria-label="Zoom" />
      <Icon w={5}><path d="M0 2.500h5M2.500 0v5" strokeWidth=".8" /></Icon>
      <Percent>100%</Percent>
    </StatusBar>
  </>
);

const apps = [
  ['Start', <Icon w={16} stroke="none">
    <path d="M0 0h7.500v7.500H0z" fill="#6fe0fb" /><path d="M8.500 0H16v7.500H8.500z" fill="#46c6f7" />
    <path d="M0 8.500h7.500V16H0z" fill="#3bbcf6" /><path d="M8.500 8.500H16V16H8.500z" fill="#129bf0" />
  </Icon>],
  ['Search', <Magnifier size={15} color="#eee" weight={2.2} />],
  ['Task view', <Icon w={16} stroke="none"><path d="M0 5h11v10H0z" fill="#777" /><path d="M4 1h12v9H4z" fill="#e8e8e8" /><path d="M4 5h7v5H4z" fill="#aaa" /></Icon>],
  ['Widgets', <Icon w={16} stroke="none">
    <path d="M0 0h16v16H0z" fill="#1266b5" /><path d="M2 2h5.500v12H2z" fill="#fff" />
    <path d="M9 2h5.500v5H9z" fill="#63cdf7" /><path d="M9 8.500h5.500V14H9z" fill="#2d9fe8" />
  </Icon>],
  ['Chat', <Icon w={16} stroke="none">
    <path d="M8 .5a7.500 7.500 0 1 1-3.500 14L.8 15.500 1.500 12A7.500 7.500 0 0 1 8 .5z" fill="#6264c7" />
    <path d="M3.500 5h6v6h-6zM10 7l3-1.800v5.600L10 9z" fill="#fff" />
  </Icon>],
  ['Files', <Icon w={17} h={15} stroke="none">
    <path d="M0 1h6l1.500 2H16v11H0z" fill="#e9a820" /><path d="M0 4h17v10H0z" fill="#fcd053" />
    <path d="M3 10.500h10.500V15H3z" fill="#1b76c8" /><path d="M6 12.500h5V15H6z" fill="#0a5296" />
  </Icon>],
  ['Store', <Icon w={13} h={15} stroke="none">
    <path d="M4 3.500V1h5v2.500" stroke="#3baef0" strokeWidth="1.300" />
    <path d="M0 3.500h13V13q0 1-1 1H1q-1 0-1-1z" fill="#fff" />
    <path d="M3.700 6h2.500v2.500H3.700z" fill="#f25022" /><path d="M6.800 6h2.500v2.500H6.800z" fill="#7fba00" />
    <path d="M3.700 9.100h2.500v2.500H3.700z" fill="#00a4ef" /><path d="M6.800 9.100h2.500v2.500H6.800z" fill="#ffb900" />
  </Icon>],
  ['Office', <Icon w={12} h={16} stroke="none">
    <path d="M0 3.500 7.500.5 12 2v12l-4.500 1.500L0 12.500l7.500.7V3.200L3 4.500v6.500L0 12.500z" fill="#e2401b" />
    <path d="M7.500.5 12 2v12l-4.500 1.500z" fill="#c9250f" />
  </Icon>],
  ['Support', <Icon w={14} stroke="none">
    <circle cx="7" cy="7" r="6.500" fill="#0a7cc0" stroke="#c5e6f8" />
    <path d="m4 10 6-6" stroke="#fff" strokeWidth="1.500" />
    <path d="M9 3.300a1.600 1.600 0 1 0 1.700 1.700M5 10.700a1.600 1.600 0 1 0-1.700-1.700" stroke="#fff" />
  </Icon>],
  ['Edge', <Icon w={17} h={16} stroke="none">
    <circle cx="8.500" cy="8" r="7.500" fill="#1673c5" />
    <path d="M1 7.500A7.500 7.500 0 0 1 16 8q0 3-3.500 3T10 9q1-4-3-4-4 0-6 2.500z" fill="#35c1d8" />
    <path d="M9 .5A7.500 7.500 0 0 1 16 8q0 3-3.500 3T10 9q2-3.500-1-8.500z" fill="#5fd068" />
    <circle cx="4.500" cy="11.500" r="4" fill="#bdb5b0" /><circle cx="4.500" cy="10.500" r="1.500" fill="#554a45" />
    <path d="M2 14.500q2.500-3.500 5 0z" fill="#554a45" />
  </Icon>],
  ['Mail', <Icon w={17} h={15} stroke="none">
    <path d="M0 5.500 8.500 0 17 5.500V15H0z" fill="#0f5ba8" /><path d="M0 5.500 8.500 10.500 17 5.500z" fill="#e8f4fd" />
    <path d="m0 5.500 8.500 5L17 5.500V15H0z" fill="#2da4ee" /><path d="M0 15 8.500 10.500 17 15z" fill="#50c3f7" />
  </Icon>],
  ['Chrome', <Icon w={15} stroke="none">
    <circle cx="7.500" cy="7.500" r="7.500" fill="#34a853" />
    <path d="M1 3.700A7.500 7.500 0 0 1 14 3.700L7.500 4.500 4.300 9z" fill="#ea4335" />
    <path d="M14 3.700A7.500 7.500 0 0 1 7 15l3.700-5.500L9 4z" fill="#fbbc04" />
    <circle cx="7.500" cy="7.500" r="3.500" fill="#4285f4" stroke="#fff" />
  </Icon>],
  ['Excel', <Icon w={16} h={15} stroke="none">
    <path d="M4 0h12v15H4z" fill="#21a366" /><path d="M10 0h6v5h-6z" fill="#33c481" />
    <path d="M10 5h6v5h-6z" fill="#107c41" /><path d="M4 10h12v5H4z" fill="#185c37" />
    <path d="M0 3.500h9v8.500H0z" fill="#107c41" /><path d="m2.700 5.500 3.500 4.500M6.200 5.500 2.700 10" stroke="#fff" strokeWidth="1.200" />
  </Icon>],
  ['OneDrive folder', <Icon w={14} h={15} stroke="none">
    <path d="M1 1h9v10l-4 3-1-2H1z" fill="#f6ce6a" /><path d="M1 1h4l1 12-5-2z" fill="#fde293" />
    <path d="M5 13.500q-.5-2.500 2-2.500.8-2.500 3-1.500 1.500-.2 1.800 1.800 2.200.2 1.500 2.700z" fill="#1b86e0" />
  </Icon>],
];
const bars = { Excel: 10, 'OneDrive folder': 4 };

const WindowsBar = () => (
  <Taskbar>
    <span />
    <Apps>
      {apps.map(([name, icon]) => (
        <AppButton key={name} aria-label={name} $open={name === 'Excel'} $bar={bars[name]}>{icon}</AppButton>
      ))}
    </Apps>
    <Tray>
      <Icon w={8} h={5} stroke="#fff"><path d="M.5 4.500 4 1l3.500 3.500" /></Icon>
      <Icon w={12} h={8} stroke="none" fill="#eee"><path d="M2.500 7.500Q0 7 .7 5T3 3.300Q4 .7 6.500 1T9 3.500q2.500 0 2.500 2t-2 2z" /></Icon>
      <Icon w={11} h={9} stroke="#fff"><path d="M.5 3.500Q5.500-1.500 10.500 3.500M2.200 5.200q3.300-3 6.600 0M4 7q1.500-1.300 3 0" /><circle cx="5.500" cy="8" r=".6" fill="#fff" /></Icon>
      <Icon w={11} h={9} stroke="#fff" strokeWidth=".9"><path d="M.5 3H2.500L5 1v7L2.500 6H.5zM6.500 3q1 1.500 0 3M8 2q2 2.500 0 5M9.300.8q2.700 3.700 0 7.400" /></Icon>
      <Icon w={11} h={9} stroke="#fff"><path d="M4 2.500h5.500v5H2.500V5.500" /><path d="M4.500 4H9v3H4.500zM10 4h1v2h-1zM0 1h4v2.500H1z" fill="#fff" stroke="none" /></Icon>
      <Clock>11:37 PM<br />11/12/2021</Clock>
    </Tray>
  </Taskbar>
);

const App = () => (
  <Page>
    <GlobalStyle />
    <Head />
    <RibbonBar />
    <Formula />
    <Sheet />
    <Bottom />
    <WindowsBar />
  </Page>
);

export default App;
